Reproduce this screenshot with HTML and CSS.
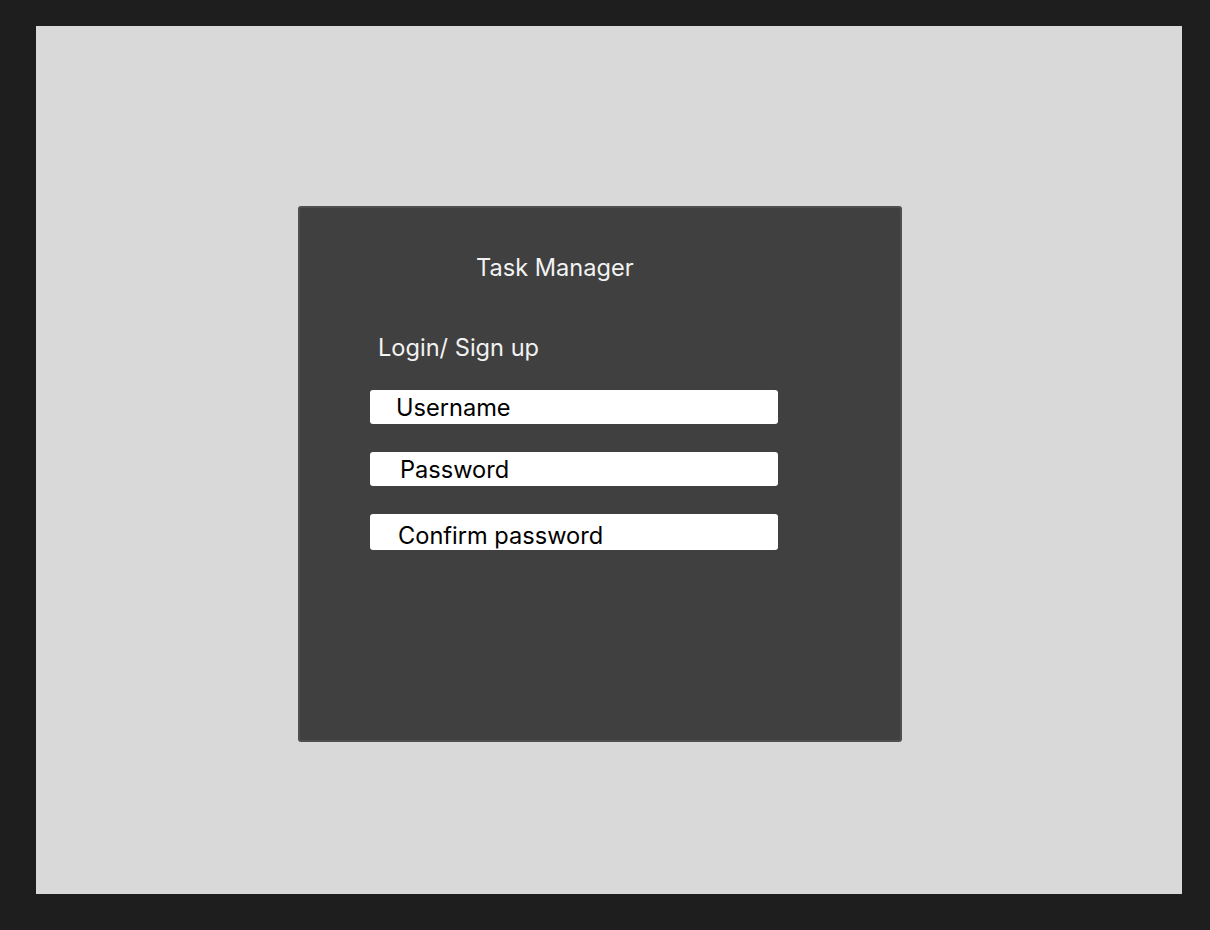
FILE: index.html
```html
<!DOCTYPE html>
<html>
<head>
<meta charset="utf-8">
<link rel="stylesheet" href="styles.css">
</head>
<body>
<div class="frame">
  <div class="card">
    <div class="title">Task Manager</div>
    <div class="subtitle">Login/ Sign up</div>
    <div class="field f1">Username</div>
    <div class="field f2">Password</div>
    <div class="field f3">Confirm password</div>
  </div>
</div>
</body>
</html>
```
FILE: styles.css
```css
html, body {
  margin: 0;
  padding: 0;
  background: #1e1e1e;
  width: 1210px;
  height: 930px;
  overflow: hidden;
  font-family: Inter, "Liberation Sans", sans-serif;
}
.frame {
  position: relative;
  margin: 26px 0 0 36px;
  width: 1146px;
  height: 868px;
  background: #d9d9d9;
  padding: 180px 0 0 262px;
  box-sizing: border-box;
}
.card {
  width: 604px;
  height: 536px;
  box-sizing: border-box;
  background: #404040;
  border: 2px solid #4f4f4f;
  border-radius: 3px;
  padding: 0 0 0 70px;
}
.title {
  color: #f2f2f2;
  font-size: 23.6px;
  line-height: 29px;
  margin: 45px 0 0 106px;
}
.subtitle {
  color: #f2f2f2;
  font-size: 23.6px;
  line-height: 29px;
  margin: 51px 0 0 8px;
}
.field {
  width: 408px;
  background: #ffffff;
  border-radius: 3px;
  color: #000;
  font-size: 23.6px;
  line-height: 29px;
  box-sizing: border-box;
}
.f1 { height: 34px; margin-top: 28px; padding: 3px 0 0 26px; }
.f2 { height: 34px; margin-top: 28px; padding: 3px 0 0 30px; }
.f3 { height: 36px; margin-top: 28px; padding: 7px 0 0 28px; }
```
